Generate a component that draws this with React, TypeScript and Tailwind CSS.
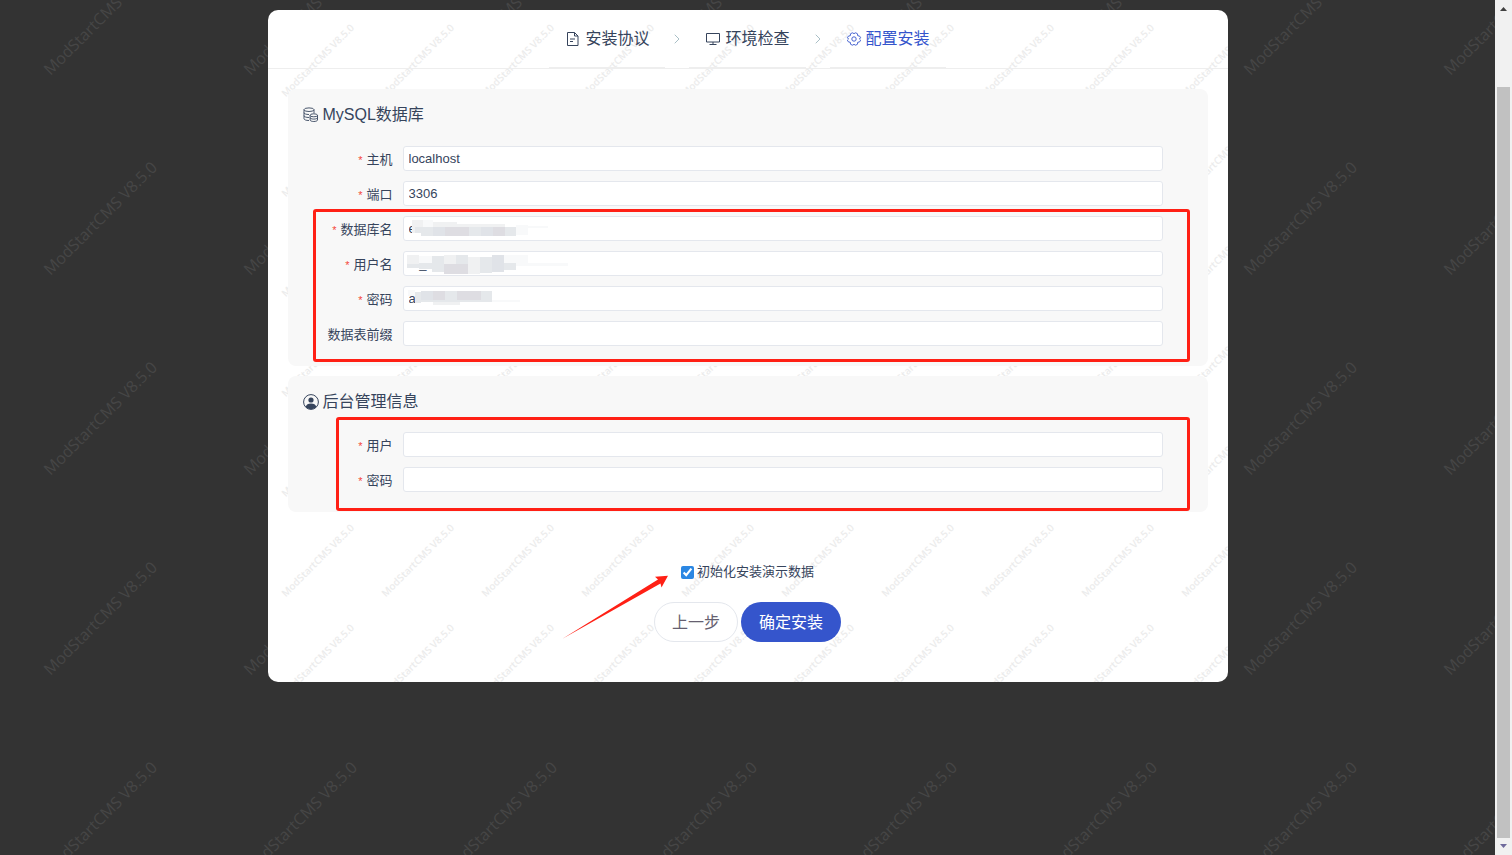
import { useState } from "react";
import { LuChevronRight } from "react-icons/lu";

interface Field {
  id: string;
  label: string;
  value?: string;
  required?: boolean;
  mask?: number[][];
}

// Mosaic cells as [x, y, width, height, shade]
const SHADES = ["#f8f9fa", "#f0f1f2", "#e5e8eb", "#e0e3e8", "#dedde2"];

const MASK_NAME = [
  [9, 4, 11, 13, 1], [20, 4, 10, 10, 0], [30, 6, 24, 6, 1], [54, 8, 48, 5, 1],
  [12, 11, 18, 6, 2], [18, 14, 12, 6, 2], [30, 11, 12, 9, 3], [42, 11, 24, 9, 4],
  [66, 11, 12, 9, 2], [78, 11, 12, 9, 3], [90, 11, 12, 9, 4], [102, 11, 11, 9, 2],
  [113, 9, 12, 10, 0], [125, 10, 20, 2, 0],
];

const MASK_USER = [
  [4, 4, 12, 9, 1], [4, 13, 12, 4, 2], [16, 12, 13, 6, 2], [16, 5, 13, 7, 0],
  [29, 5, 12, 16, 2], [41, 4, 12, 9, 1], [53, 4, 12, 9, 2], [41, 13, 24, 10, 4],
  [65, 6, 12, 17, 1], [77, 6, 12, 16, 2], [89, 4, 12, 17, 3], [101, 12, 12, 7, 2],
  [101, 4, 24, 8, 0], [113, 12, 52, 3, 0],
];

const MASK_PASSWORD = [
  [5, 4, 7, 6, 0], [12, 6, 6, 11, 2], [18, 5, 12, 10, 3], [30, 5, 12, 9, 4], [42, 5, 12, 13, 2],
  [54, 5, 24, 9, 4], [78, 5, 11, 11, 2], [18, 14, 71, 2, 2], [30, 16, 27, 3, 1],
  [89, 14, 28, 2, 0],
];

const databaseFields: Field[] = [
  { id: "db-host", label: "主机", value: "localhost", required: true },
  { id: "db-port", label: "端口", value: "3306", required: true },
  { id: "db-name", label: "数据库名", value: "e", required: true, mask: MASK_NAME },
  { id: "db-user", label: "用户名", value: "e _", required: true, mask: MASK_USER },
  { id: "db-password", label: "密码", value: "a", required: true, mask: MASK_PASSWORD },
  { id: "db-prefix", label: "数据表前缀" },
];

const adminFields: Field[] = [
  { id: "admin-user", label: "用户", required: true },
  { id: "admin-password", label: "密码", required: true },
];

function DocIcon() {
  return (
    <svg className="h-4 w-4" viewBox="0 0 16 16" fill="none" stroke="currentColor" aria-hidden="true">
      <path d="M2.5 1.5h7l3.500 3.500v9.500h-10.500z" />
      <path d="M9.500 1.500v3.500h3.500M5 8h5M5 10.500h3" />
    </svg>
  );
}

function MonitorIcon() {
  return (
    <svg className="h-4 w-4" viewBox="0 0 16 16" fill="none" stroke="currentColor" aria-hidden="true">
      <path d="M1.500 2.500h13v8.500h-13zM8 11v2.500M4.500 13.500h7" />
    </svg>
  );
}

function GearIcon() {
  return (
    <svg className="h-4 w-4" viewBox="0 0 16 16" fill="none" stroke="currentColor" strokeWidth={0.9} aria-hidden="true">
      <path
        strokeLinejoin="round"
        d="M6.300 1.800 8 2.600l1.700-.8 1.800 1 .2 1.900 1.900.4 1 1.700L13.400 8l1.200 1.200-1 1.700-1.900.4-.2 1.900-1.800 1-1.700-.8-1.700.8-1.800-1-.2-1.900-1.900-.4-1-1.700L2.600 8 1.400 6.800l1-1.700 1.900-.4.200-1.900z"
      />
      <circle cx="8" cy="8" r="2.200" />
    </svg>
  );
}

function DatabaseIcon() {
  return (
    <svg className="h-4 w-4" viewBox="0 0 16 16" fill="none" stroke="currentColor" strokeWidth={0.9} aria-hidden="true">
      <ellipse cx="6" cy="2.700" rx="5" ry="1.800" />
      <path d="M1 2.700v9c0 1 2 1.800 5 1.800M11 2.700v3.500M1 5.700c0 1 2 1.800 5 1.800M1 8.700c0 1 2 1.800 5 1.800" />
      <ellipse cx="10.800" cy="8.300" rx="3.700" ry="1.500" />
      <path d="M7.100 8.300v4.700c0 .8 1.600 1.500 3.700 1.500s3.700-.7 3.700-1.500V8.300M7.100 10.600c0 .8 1.600 1.500 3.700 1.500s3.700-.7 3.700-1.500" />
    </svg>
  );
}

function UserIcon() {
  return (
    <svg className="h-4 w-4" viewBox="0 0 16 16" fill="none" stroke="currentColor" aria-hidden="true">
      <circle cx="8" cy="8" r="7.400" />
      <circle cx="8" cy="6" r="2.600" fill="currentColor" stroke="none" />
      <path d="M2.600 13c.6-2.500 2.600-3.500 5.400-3.500s4.800 1 5.400 3.500c-1.300 1.400-3.200 2.200-5.400 2.200S3.900 14.400 2.600 13z" fill="currentColor" stroke="none" />
    </svg>
  );
}

// Tiled diagonal version mark, behind the page content
function PageWatermark() {
  return (
    <div className="pointer-events-none absolute inset-0 overflow-hidden select-none" aria-hidden="true">
      <div className="absolute -top-[82px] left-0 -right-[200px] grid grid-cols-[repeat(auto-fill,200px)] auto-rows-[200px] font-['Open_Sans',sans-serif] text-base text-[#464646]">
        {Array.from({ length: 40 }, (_, i) => (
          <div key={i} className="flex items-center justify-center">
            <span className="-rotate-45 whitespace-nowrap">ModStartCMS V8.5.0</span>
          </div>
        ))}
      </div>
    </div>
  );
}

function CardWatermark() {
  return (
    <div className="pointer-events-none absolute inset-0 overflow-hidden select-none" aria-hidden="true">
      <div className="absolute top-0 left-0 -right-[100px] grid grid-cols-[repeat(auto-fill,100px)] auto-rows-[100px] font-['Open_Sans',sans-serif] text-[10px] font-semibold text-[#ececec]">
        {Array.from({ length: 70 }, (_, i) => (
          <div key={i} className="flex items-center justify-center">
            <span className="-rotate-45 whitespace-nowrap">ModStartCMS V8.5.0</span>
          </div>
        ))}
      </div>
    </div>
  );
}

function FormRow({ field }: { field: Field }) {
  const [value, setValue] = useState(field.value ?? "");

  return (
    <div className="flex h-[25px] items-center">
      <label
        htmlFor={field.id}
        className="flex w-[100px] shrink-0 justify-end gap-1 pt-[2px] pr-[10px] text-[13px] leading-5 whitespace-nowrap"
      >
        {field.required && <span className="text-[11px] text-[#f5483b]">*</span>}
        {field.label}
      </label>
      <div className="relative flex-1">
        <input
          id={field.id}
          type="text"
          value={value}
          onChange={(e) => setValue(e.target.value)}
          className="block h-[25px] w-full rounded-[3px] border border-[#e4e7ed] bg-white px-[5px] text-[13px] outline-none focus:border-[#3555cc]"
        />
        {field.mask && (
          <svg className="pointer-events-none absolute top-0 left-0 h-[25px] w-[170px]" viewBox="0 0 170 25" shapeRendering="crispEdges" aria-hidden="true">
            {field.mask.map(([x, y, w, h, shade], i) => (
              <rect key={i} x={x} y={y} width={w} height={h} fill={SHADES[shade]} />
            ))}
          </svg>
        )}
      </div>
    </div>
  );
}

export default function App() {
  const [demo, setDemo] = useState(true);

  return (
    <div className="flex min-h-screen bg-[#333333] font-['Liberation_Sans','Noto_Sans_CJK_SC',sans-serif] text-[#36445c]">
      <div className="relative flex-1 overflow-hidden pt-[10px]">
        <PageWatermark />

        <main className="relative mx-auto max-w-[960px] overflow-hidden rounded-[10px] bg-white pb-10">
          <CardWatermark />

          <div className="relative">
            <nav className="flex justify-center border-b border-[#eeeeee] text-base">
              <div className="flex h-[58px] items-center gap-1 border-b border-[#eeeeee] px-4">
                <DocIcon />
                安装协议
              </div>
              <div className="flex w-6 items-center justify-center text-[#a9bfc6]">
                <LuChevronRight size={16} strokeWidth={1.5} />
              </div>
              <div className="flex h-[58px] items-center gap-1 border-b border-[#eeeeee] px-4">
                <MonitorIcon />
                环境检查
              </div>
              <div className="flex w-6 items-center justify-center text-[#a9bfc6]">
                <LuChevronRight size={16} strokeWidth={1.5} />
              </div>
              <div className="flex h-[58px] items-center gap-1 border-b border-[#eeeeee] px-4 text-[#3555cc]">
                <GearIcon />
                配置安装
              </div>
            </nav>

            <form className="p-5 pb-0" onSubmit={(e) => e.preventDefault()}>
              <section className="relative mb-[10px] rounded-lg bg-[#f8f8f8] px-[15px] pt-4 pb-5">
                <h2 className="mb-[21px] flex h-5 items-center gap-1 text-base">
                  <DatabaseIcon />
                  MySQL数据库
                </h2>
                <div className="flex flex-col gap-[10px] pr-[30px]">
                  {databaseFields.map((field) => (
                    <FormRow key={field.id} field={field} />
                  ))}
                </div>
                <div className="pointer-events-none absolute top-[120px] right-[18px] bottom-1 left-[25px] rounded-[3px] border-3 border-[#ff2015]" />
              </section>

              <section className="relative rounded-lg bg-[#f8f8f8] px-[15px] pt-4 pb-5">
                <h2 className="mb-5 flex h-5 items-center gap-1 text-base">
                  <UserIcon />
                  后台管理信息
                </h2>
                <div className="flex flex-col gap-[10px] pr-[30px]">
                  {adminFields.map((field) => (
                    <FormRow key={field.id} field={field} />
                  ))}
                </div>
                <div className="pointer-events-none absolute top-[41px] right-[18px] bottom-px left-[48px] rounded-[3px] border-3 border-[#ff2015]" />
              </section>

              <div className="relative mt-[50px] flex justify-center">
                <label className="flex h-5 items-center gap-[3px] text-[13px]">
                  <input
                    type="checkbox"
                    checked={demo}
                    onChange={(e) => setDemo(e.target.checked)}
                    className="h-[13px] w-[13px] accent-[#2b87e3]"
                  />
                  初始化安装演示数据
                </label>
                {/* Arrow pointing at the demo data option */}
                <svg className="pointer-events-none absolute top-[13px] right-1/2 mr-[79px] h-[66px] w-[108px]" viewBox="0 0 108 66" aria-hidden="true">
                  <path d="M1 64 97 4.500 94 1.800 107 .8 100.500 12.500 99.500 8.500z" fill="#ff2015" />
                </svg>
              </div>

              <div className="mt-5 flex justify-center gap-[3px] text-base">
                <button type="button" className="h-10 rounded-full border border-[#e4e7ed] bg-white px-[17px] pt-px text-[#665f70]">
                  上一步
                </button>
                <button type="submit" className="h-10 rounded-full bg-[#3555cc] px-[18px] pt-px text-white">
                  确定安装
                </button>
              </div>
            </form>
          </div>
        </main>
      </div>

      {/* Scroll track */}
      <div className="flex w-[17px] shrink-0 flex-col items-center bg-[#f1f1f1]" aria-hidden="true">
        <svg className="mb-[70px] h-[17px] w-[17px]" viewBox="0 0 17 17">
          <path d="M5 11h7L8.500 7z" fill="#404040" />
        </svg>
        <div className="w-[13px] flex-1 bg-[#c1c1c1]" />
        <svg className="h-[17px] w-[17px]" viewBox="0 0 17 17">
          <path d="M5 6h7L8.500 10z" fill="#6f6a9c" />
        </svg>
      </div>
    </div>
  );
}
